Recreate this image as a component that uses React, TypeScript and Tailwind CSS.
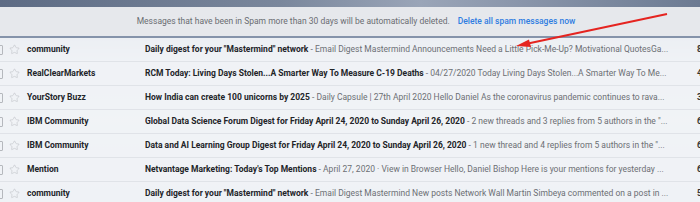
import { Star } from 'lucide-react'

const rows = [
  {
    sender: 'community',
    subject: 'Daily digest for your "Mastermind" network',
    snippet: 'Email Digest Mastermind Announcements Need a Little Pick-Me-Up? Motivational QuotesGa...',
    date: '8',
  },
  {
    sender: 'RealClearMarkets',
    subject: 'RCM Today: Living Days Stolen...A Smarter Way To Measure C-19 Deaths',
    snippet: '04/27/2020 Today Living Days Stolen...A Smarter Way To Me...',
    date: '4',
  },
  {
    sender: 'YourStory Buzz',
    subject: 'How India can create 100 unicorns by 2025',
    snippet: 'Daily Capsule | 27th April 2020 Hello Daniel As the coronavirus pandemic continues to rava...',
    date: '3',
  },
  {
    sender: 'IBM Community',
    subject: 'Global Data Science Forum Digest for Friday April 24, 2020 to Sunday April 26, 2020',
    snippet: '2 new threads and 3 replies from 5 authors in the "...',
    date: '6',
  },
  {
    sender: 'IBM Community',
    subject: 'Data and AI Learning Group Digest for Friday April 24, 2020 to Sunday April 26, 2020',
    snippet: '1 new thread and 4 replies from 5 authors in the "...',
    date: '6',
  },
  {
    sender: 'Mention',
    subject: "Netvantage Marketing: Today's Top Mentions",
    snippet: 'April 27, 2020 · View in Browser Hello, Daniel Bishop Here is your mentions for yesterday ...',
    date: '6',
  },
  {
    sender: 'community',
    subject: 'Daily digest for your "Mastermind" network',
    snippet: 'Email Digest Mastermind New posts Network Wall Martin Simbeya commented on a post in ...',
    date: '5',
  },
]

export default function App() {
  return (
    <div className="relative w-[700px] h-[202px] overflow-hidden bg-[linear-gradient(180deg,#6f7d95_0px,#8e9bb0_10px,#d9dde4_60px,#e3e6eb_120px,#d6dbe3_202px)] font-['Roboto',sans-serif] text-[8.5px]">
      {/* top strip */}
      <div className="h-[7px] bg-[linear-gradient(90deg,#5d6b84,#7a879c_40%,#9aa5b8_60%,#6c7a92)]" />

      {/* spam banner */}
      <div className="h-[31px] pl-[12px] flex items-center justify-center gap-[8px] bg-[#e6e8ec] border-b-[2px] border-[#8593aa]">
        <span className="text-[#6a6d72]">Messages that have been in Spam more than 30 days will be automatically deleted.</span>
        <span className="text-[#2f7de1] font-medium">Delete all spam messages now</span>
      </div>

      {/* messages */}
      <div>
        {rows.map((row, index) => (
          <div
            key={index}
            className="h-[24px] flex items-center bg-[#f2f4f7]/90 border-b border-[#e0e3e8] whitespace-nowrap"
          >
            <div className="ml-[-7px] w-[10px] h-[10px] border border-[#b5b8bd] rounded-[1px] shrink-0" />
            <Star size={11} strokeWidth={1.4} className="ml-[6px] text-[#c2c5ca] shrink-0" />
            <div className="ml-[7px] w-[118px] shrink-0 font-bold text-[#222428]">{row.sender}</div>
            <div className="w-[527px] shrink-0 overflow-hidden text-ellipsis">
              <span className="font-bold text-[#222428]">{row.subject}</span>
              <span className="text-[#6c6f74]"> - {row.snippet}</span>
            </div>
            <div className="ml-[25px] font-bold text-[#333]">{row.date}</div>
          </div>
        ))}
      </div>

      {/* red annotation arrow */}
      <svg className="absolute left-0 top-0 pointer-events-none" width="700" height="202">
        <line x1="667" y1="14" x2="528" y2="43.5" stroke="#e52420" strokeWidth="2" />
        <polygon points="516,46 529,39.5 531,47" fill="#e52420" />
      </svg>
    </div>
  )
}
